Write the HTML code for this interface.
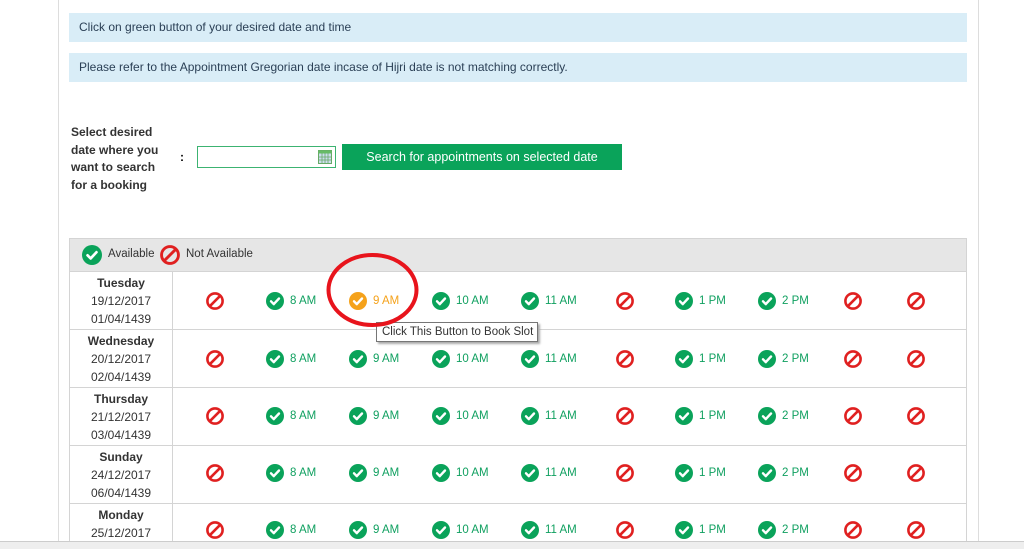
<!DOCTYPE html>
<html style="width:1024px;height:549px;overflow:hidden"><head><meta charset="utf-8"><style>
*{margin:0;padding:0;box-sizing:border-box}
body{width:1024px;height:549px;overflow:hidden;background:#fff;font-family:"Liberation Sans",sans-serif;position:relative;font-size:12px}
.a{position:absolute}
.panel{left:58px;top:0;width:921px;height:549px;border-left:1px solid #ddd;border-right:1px solid #ddd}
.info{left:69px;width:898px;height:29px;background:#d9edf7;color:#2a3f55;font-size:12px;line-height:29px;padding-left:10px}
.lbl{left:71px;top:124px;width:96px;font-weight:bold;color:#333;line-height:17.5px;font-size:12px}
.inp{left:197px;top:146px;width:139px;height:22px;border:1px solid #3cb371;background:#fff}
.btn{left:342px;top:144px;width:280px;height:26px;background:#0aa35a;color:#fff;font-size:12.5px;text-align:center;line-height:26px}
.hdr{left:69px;top:238px;width:898px;height:34px;background:#e6e6e6;border:1px solid #d4d4d4}
.row{left:69px;width:898px;height:58px;border-bottom:1px solid #d4d4d4;border-left:1px solid #d4d4d4;border-right:1px solid #d4d4d4}
.dc{left:0;top:0;width:103px;height:57px;border-right:1px solid #d4d4d4;text-align:center;font-size:12px;color:#333;line-height:18px;padding-top:2px}
.dc b{display:block}
.s{position:absolute;height:18px;line-height:18px;font-size:11.5px;color:#10a060;white-space:nowrap}
.s svg{vertical-align:top;margin-right:6px}
.bar{left:0;top:541px;width:1024px;height:8px;background:#eee;border-top:1px solid #ccc}
</style></head><body>
<svg width="0" height="0" style="position:absolute"><defs>
<symbol id="ok" viewBox="0 0 18 18"><circle cx="9" cy="9" r="9" fill="#0aa35a"/><path d="M5 9.3l2.8 2.8L13 6.5" stroke="#fff" stroke-width="2.4" fill="none" stroke-linecap="round" stroke-linejoin="round"/></symbol>
<symbol id="ko" viewBox="0 0 18 18"><circle cx="9" cy="9" r="7.6" stroke="#e02020" stroke-width="2.6" fill="none"/><path d="M4.2 13.8L13.8 4.2" stroke="#e02020" stroke-width="2.6"/></symbol>
<symbol id="or" viewBox="0 0 18 18"><circle cx="9" cy="9" r="9" fill="#f5a21b"/><path d="M5 9.3l2.8 2.8L13 6.5" stroke="#fff" stroke-width="2.4" fill="none" stroke-linecap="round" stroke-linejoin="round"/></symbol>
</defs></svg>
<div class="a panel"></div>
<div class="a info" style="top:13px">Click on green button of your desired date and time</div>
<div class="a info" style="top:53px">Please refer to the Appointment Gregorian date incase of Hijri date is not matching correctly.</div>
<div class="a lbl">Select desired date where you want to search for a booking</div>
<div class="a" style="left:180px;top:150px;font-weight:bold">:</div>
<div class="a inp"><svg class="a" style="left:120px;top:3px" width="14" height="14" viewBox="0 0 14 14"><rect x="0.5" y="0.5" width="13" height="13" fill="#cde" stroke="#6a6"/><rect x="0.5" y="0.5" width="13" height="3" fill="#6b6"/><path d="M0 7h14M0 10h14M4 3v11M7 3v11M10 3v11" stroke="#6a6" stroke-width="0.8"/></svg></div>
<div class="a btn">Search for appointments on selected date</div>
<div class="a hdr"><div class="s" style="left:12px;top:6px;color:#333"><svg width="20" height="20"><use href="#ok"/></svg>Available</div><div class="s" style="left:90px;top:6px;color:#333"><svg width="20" height="20"><use href="#ko"/></svg>Not Available</div></div>

<div class="a row" style="top:272px"><div class="a dc"><b>Tuesday</b>19/12/2017<br>01/04/1439</div></div>
<div class="a row" style="top:330px"><div class="a dc"><b>Wednesday</b>20/12/2017<br>02/04/1439</div></div>
<div class="a row" style="top:388px"><div class="a dc"><b>Thursday</b>21/12/2017<br>03/04/1439</div></div>
<div class="a row" style="top:446px"><div class="a dc"><b>Sunday</b>24/12/2017<br>06/04/1439</div></div>
<div class="a row" style="top:504px"><div class="a dc"><b>Monday</b>25/12/2017<br>07/04/1439</div></div>

<div class="a" style="left:0;top:292px;width:1024px">
<div class="s" style="left:206px"><svg width="18" height="18"><use href="#ko"/></svg></div>
<div class="s" style="left:266px"><svg width="18" height="18"><use href="#ok"/></svg>8 AM</div>
<div class="s" style="left:349px;color:#f5a21b"><svg width="18" height="18"><use href="#or"/></svg>9 AM</div>
<div class="s" style="left:432px"><svg width="18" height="18"><use href="#ok"/></svg>10 AM</div>
<div class="s" style="left:521px"><svg width="18" height="18"><use href="#ok"/></svg>11 AM</div>
<div class="s" style="left:616px"><svg width="18" height="18"><use href="#ko"/></svg></div>
<div class="s" style="left:675px"><svg width="18" height="18"><use href="#ok"/></svg>1 PM</div>
<div class="s" style="left:758px"><svg width="18" height="18"><use href="#ok"/></svg>2 PM</div>
<div class="s" style="left:844px"><svg width="18" height="18"><use href="#ko"/></svg></div>
<div class="s" style="left:907px"><svg width="18" height="18"><use href="#ko"/></svg></div>
</div>
<div class="a" style="left:0;top:350px;width:1024px">
<div class="s" style="left:206px"><svg width="18" height="18"><use href="#ko"/></svg></div>
<div class="s" style="left:266px"><svg width="18" height="18"><use href="#ok"/></svg>8 AM</div>
<div class="s" style="left:349px"><svg width="18" height="18"><use href="#ok"/></svg>9 AM</div>
<div class="s" style="left:432px"><svg width="18" height="18"><use href="#ok"/></svg>10 AM</div>
<div class="s" style="left:521px"><svg width="18" height="18"><use href="#ok"/></svg>11 AM</div>
<div class="s" style="left:616px"><svg width="18" height="18"><use href="#ko"/></svg></div>
<div class="s" style="left:675px"><svg width="18" height="18"><use href="#ok"/></svg>1 PM</div>
<div class="s" style="left:758px"><svg width="18" height="18"><use href="#ok"/></svg>2 PM</div>
<div class="s" style="left:844px"><svg width="18" height="18"><use href="#ko"/></svg></div>
<div class="s" style="left:907px"><svg width="18" height="18"><use href="#ko"/></svg></div>
</div>
<div class="a" style="left:0;top:407px;width:1024px">
<div class="s" style="left:206px"><svg width="18" height="18"><use href="#ko"/></svg></div>
<div class="s" style="left:266px"><svg width="18" height="18"><use href="#ok"/></svg>8 AM</div>
<div class="s" style="left:349px"><svg width="18" height="18"><use href="#ok"/></svg>9 AM</div>
<div class="s" style="left:432px"><svg width="18" height="18"><use href="#ok"/></svg>10 AM</div>
<div class="s" style="left:521px"><svg width="18" height="18"><use href="#ok"/></svg>11 AM</div>
<div class="s" style="left:616px"><svg width="18" height="18"><use href="#ko"/></svg></div>
<div class="s" style="left:675px"><svg width="18" height="18"><use href="#ok"/></svg>1 PM</div>
<div class="s" style="left:758px"><svg width="18" height="18"><use href="#ok"/></svg>2 PM</div>
<div class="s" style="left:844px"><svg width="18" height="18"><use href="#ko"/></svg></div>
<div class="s" style="left:907px"><svg width="18" height="18"><use href="#ko"/></svg></div>
</div>
<div class="a" style="left:0;top:464px;width:1024px">
<div class="s" style="left:206px"><svg width="18" height="18"><use href="#ko"/></svg></div>
<div class="s" style="left:266px"><svg width="18" height="18"><use href="#ok"/></svg>8 AM</div>
<div class="s" style="left:349px"><svg width="18" height="18"><use href="#ok"/></svg>9 AM</div>
<div class="s" style="left:432px"><svg width="18" height="18"><use href="#ok"/></svg>10 AM</div>
<div class="s" style="left:521px"><svg width="18" height="18"><use href="#ok"/></svg>11 AM</div>
<div class="s" style="left:616px"><svg width="18" height="18"><use href="#ko"/></svg></div>
<div class="s" style="left:675px"><svg width="18" height="18"><use href="#ok"/></svg>1 PM</div>
<div class="s" style="left:758px"><svg width="18" height="18"><use href="#ok"/></svg>2 PM</div>
<div class="s" style="left:844px"><svg width="18" height="18"><use href="#ko"/></svg></div>
<div class="s" style="left:907px"><svg width="18" height="18"><use href="#ko"/></svg></div>
</div>
<div class="a" style="left:0;top:521px;width:1024px">
<div class="s" style="left:206px"><svg width="18" height="18"><use href="#ko"/></svg></div>
<div class="s" style="left:266px"><svg width="18" height="18"><use href="#ok"/></svg>8 AM</div>
<div class="s" style="left:349px"><svg width="18" height="18"><use href="#ok"/></svg>9 AM</div>
<div class="s" style="left:432px"><svg width="18" height="18"><use href="#ok"/></svg>10 AM</div>
<div class="s" style="left:521px"><svg width="18" height="18"><use href="#ok"/></svg>11 AM</div>
<div class="s" style="left:616px"><svg width="18" height="18"><use href="#ko"/></svg></div>
<div class="s" style="left:675px"><svg width="18" height="18"><use href="#ok"/></svg>1 PM</div>
<div class="s" style="left:758px"><svg width="18" height="18"><use href="#ok"/></svg>2 PM</div>
<div class="s" style="left:844px"><svg width="18" height="18"><use href="#ko"/></svg></div>
<div class="s" style="left:907px"><svg width="18" height="18"><use href="#ko"/></svg></div>
</div>

<div class="a" style="left:376px;top:322px;width:162px;height:20px;background:#fff;border:1px solid #767676;box-shadow:2px 2px 2px #aaa;font-size:11.5px;color:#333;line-height:18px;padding-left:5px;white-space:nowrap">Click This Button to Book Slot</div>
<svg class="a" style="left:325px;top:250px" width="95" height="80"><ellipse cx="47.5" cy="40" rx="44" ry="35" stroke="#e8141c" stroke-width="4" fill="none"/></svg>
<div class="a bar"></div>
</body></html>
